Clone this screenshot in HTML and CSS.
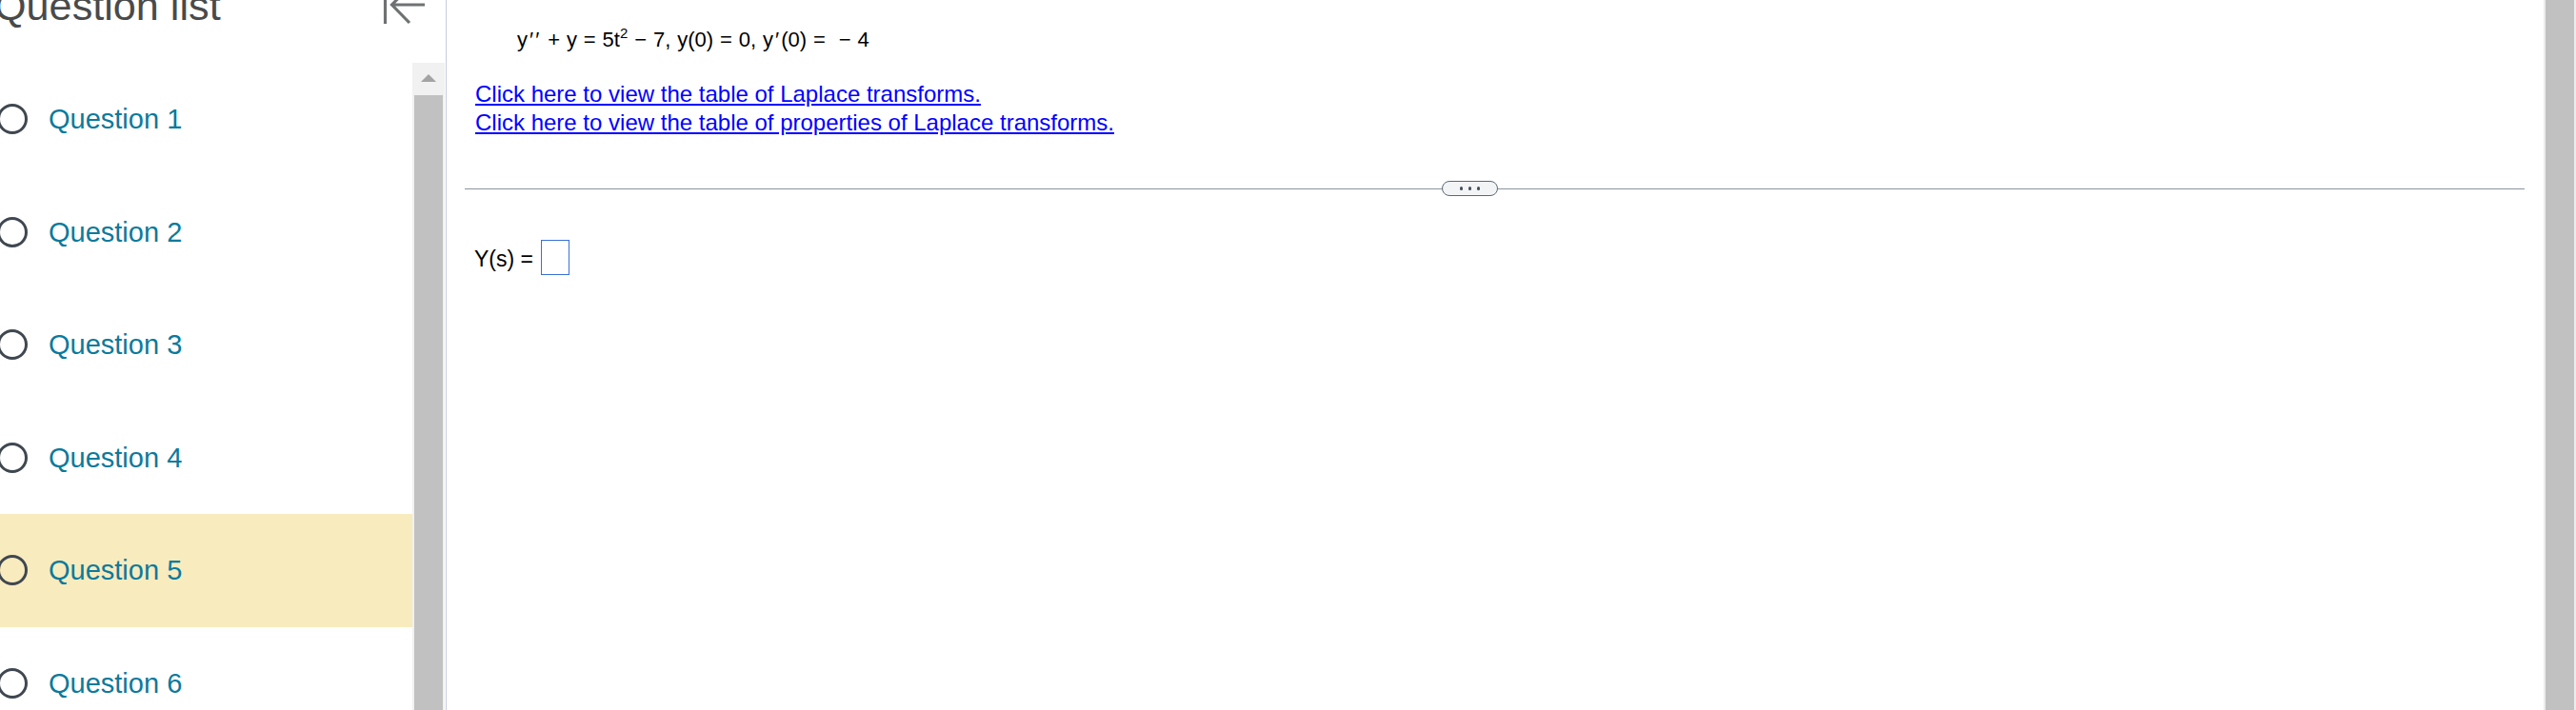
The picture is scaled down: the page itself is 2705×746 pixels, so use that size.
FILE: index.html
```html
<!DOCTYPE html>
<html lang="en">
<head>
    <meta charset="UTF-8">
    <title>Question 5 - Laplace</title>
    <link rel="stylesheet" href="styles.css">
</head>
<body>
    <div class="app">
        <div class="sidebar">
            <div class="sidebar-head">
                <h1 class="sidebar-title">Question list</h1>
                <svg class="collapse-icon" width="46" height="42" viewBox="0 0 46 42">
                    <path d="M2.5 0 V40" stroke="#6f7272" stroke-width="3.2" fill="none"/>
                    <path d="M44 20 H10 M28 1 L9.5 20 L28 39" stroke="#6f7272" stroke-width="3.2" fill="none"/>
                </svg>
            </div>
            <div class="sidebar-body">
                <ul class="qlist">
                    <li class="q-item"><span class="radio"></span><span class="q-label">Question 1</span></li>
                    <li class="q-item"><span class="radio"></span><span class="q-label">Question 2</span></li>
                    <li class="q-item"><span class="radio"></span><span class="q-label">Question 3</span></li>
                    <li class="q-item"><span class="radio"></span><span class="q-label">Question 4</span></li>
                    <li class="q-item current"><span class="radio"></span><span class="q-label">Question 5</span></li>
                    <li class="q-item"><span class="radio"></span><span class="q-label">Question 6</span></li>
                </ul>
                <div class="vscroll">
                    <div class="vscroll-up"><span class="tri-up"></span></div>
                    <div class="vscroll-thumb"></div>
                </div>
            </div>
        </div>

        <div class="main">
            <p class="equation">y<span class="pr">&prime;&prime;</span> + y = 5t<sup>2</sup> &minus; 7, y(0) = 0, y<span class="pr">&prime;</span>(0) = &nbsp;&minus; 4</p>
            <div class="links">
                <a href="#">Click here to view the table of Laplace transforms.</a><br>
                <a href="#">Click here to view the table of properties of Laplace transforms.</a>
            </div>
            <div class="divider">
                <span class="divider-line first"></span>
                <button type="button" class="more-btn"><i></i><i></i><i></i></button>
                <span class="divider-line"></span>
            </div>
            <div class="answer">
                <span class="answer-label">Y(s) =</span>
                <span class="answer-box"></span>
            </div>
        </div>

        <div class="page-scroll">
            <div class="page-thumb"></div>
        </div>
    </div>
</body>
</html>
```

FILE: styles.css
```css
html, body {
    margin: 0;
    height: 746px;
    overflow: hidden;
    background: #fff;
    font-family: "Liberation Sans", Arial, sans-serif;
}
.app {
    display: flex;
    height: 746px;
}
.sidebar {
    width: 469px;
    flex: none;
    border-right: 1px solid #c9cbe0;
    box-sizing: border-box;
    display: flex;
    flex-direction: column;
}
.sidebar-head {
    height: 66px;
    flex: none;
    display: flex;
    justify-content: space-between;
    align-items: flex-start;
    padding-right: 20px;
}
.sidebar-title {
    margin: -15px 0 0 -6px;
    font-size: 43.2px;
    line-height: 1;
    font-weight: normal;
    color: #4a4a4a;
}
.collapse-icon {
    margin-top: -15px;
}
.sidebar-body {
    flex: 1;
    display: flex;
    padding-right: 1px;
    min-height: 0;
}
.qlist {
    list-style: none;
    margin: 0;
    padding: 0;
    width: 433px;
}
.q-item {
    height: 118.5px;
    display: flex;
    align-items: center;
    gap: 22px;
}
.q-item.current {
    background: #f8ebbe;
}
.radio {
    width: 32px;
    height: 32px;
    margin-left: -3px;
    border: 3px solid #3f4750;
    border-radius: 50%;
    box-sizing: border-box;
    flex: none;
}
.q-label {
    font-size: 29px;
    color: #0b7a9c;
    padding-top: 1px;
}
.vscroll {
    width: 34px;
    background: #f1f1f1;
    display: flex;
    flex-direction: column;
    align-items: center;
}
.vscroll-up {
    height: 34px;
    width: 100%;
    display: flex;
    justify-content: center;
    align-items: center;
}
.tri-up {
    width: 0;
    height: 0;
    border-left: 8px solid transparent;
    border-right: 8px solid transparent;
    border-bottom: 8px solid #a3a3a3;
    margin-top: -2px;
}
.vscroll-thumb {
    flex: 1;
    width: 30px;
    background: #c1c1c1;
}
.main {
    flex: 1;
    padding: 0 20px 0 19px;
    min-width: 0;
}
.equation {
    margin: 30px 0 0 55px;
    font-size: 22px;
    line-height: 24px;
    word-spacing: 0.8px;
    color: #000;
    white-space: nowrap;
}
.equation .pr {
    letter-spacing: 2px;
    margin-left: 2px;
}
.equation sup {
    font-size: 15px;
    line-height: 0;
    vertical-align: 9px;
}
.links {
    margin: 30px 0 0 11px;
    font-size: 24px;
    line-height: 30px;
}
.links a {
    color: #0000ff;
    text-decoration: underline;
}
.divider {
    margin-top: 46px;
    height: 16px;
    display: flex;
    align-items: center;
}
.divider-line {
    flex: 1;
    height: 1px;
    background: #8a93a0;
}
.divider-line.first {
    flex: none;
    width: 1026px;
}
.more-btn {
    width: 59px;
    height: 16px;
    padding: 0;
    border: 1.3px solid #5b6878;
    border-radius: 8px;
    background: #f3f4f6;
    display: flex;
    justify-content: center;
    align-items: center;
    gap: 5.5px;
    box-sizing: border-box;
}
.more-btn i {
    width: 3.6px;
    height: 3.6px;
    border-radius: 50%;
    background: #474f5b;
}
.answer {
    margin: 46px 0 0 10px;
    display: flex;
    align-items: center;
    gap: 8px;
}
.answer-label {
    font-size: 23px;
    color: #000;
    padding-top: 4px;
}
.answer-box {
    width: 30px;
    height: 37px;
    border: 1.3px solid #3a6fd8;
    box-sizing: border-box;
}
.page-scroll {
    width: 34px;
    flex: none;
    background: #ececec;
    display: flex;
    justify-content: center;
}
.page-thumb {
    width: 30px;
    background: #c1c1c1;
}
```
